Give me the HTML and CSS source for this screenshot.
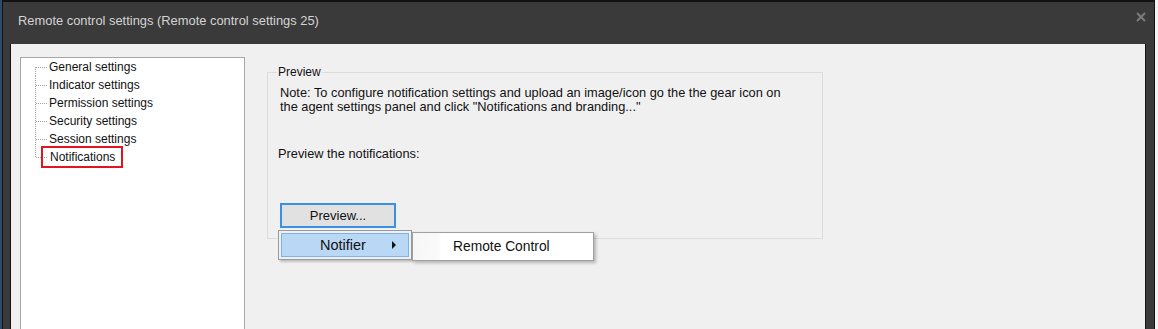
FILE: index.html
```html
<!DOCTYPE html>
<html>
<head>
<meta charset="utf-8">
<link rel="stylesheet" href="styles.css">
</head>
<body>
<div class="window">
  <div class="titlebar">
    <span class="title">Remote control settings (Remote control settings 25)</span>
    <svg class="close" width="10" height="10" viewBox="0 0 10 10"><path d="M1 1L9 9M9 1L1 9" stroke="#7c7c7c" stroke-width="2"/></svg>
  </div>
  <div class="client">
    <div class="tree">
      <ul class="nodes">
        <li class="first">General settings</li>
        <li>Indicator settings</li>
        <li>Permission settings</li>
        <li>Security settings</li>
        <li>Session settings</li>
        <li class="last"><span class="mark">Notifications</span></li>
      </ul>
    </div>
    <div class="main">
      <fieldset class="group">
        <legend class="legend">Preview</legend>
        <p class="note">Note: To configure notification settings and upload an image/icon go the the gear icon on<br>the agent settings panel and click "Notifications and branding..."</p>
        <p class="prompt">Preview the notifications:</p>
        <div class="btnwrap">
          <button class="btn">Preview...</button>
          <div class="menu">
            <div class="menuitem"><span>Notifier</span><span class="arrow"></span></div>
          </div>
          <div class="submenu">
            <div class="subitem">Remote Control</div>
          </div>
        </div>
      </fieldset>
    </div>
  </div>
</div>
</body>
</html>
```
FILE: styles.css
```css
html, body {
  margin: 0;
  padding: 0;
  height: 329px;
  overflow: hidden;
}
body {
  background: linear-gradient(to right, #2f4a6a 0 2px, #f4f4f4 2px);
  font-family: "Liberation Sans", Arial, sans-serif;
  font-size: 12px;
  color: #111;
}
.window {
  margin-left: 2px;
  width: 1151px;
  height: 360px;
  background: #3a3a3a;
  border: 1px solid #121212;
  border-top-width: 2px;
  display: flex;
  flex-direction: column;
  box-sizing: content-box;
}
.titlebar {
  height: 42px;
  display: flex;
  justify-content: space-between;
  align-items: flex-start;
  padding: 0 8px 0 15px;
}
.title {
  color: #d4d4d4;
  font-size: 12.9px;
  margin-top: 11px;
}
.close {
  margin-top: 10px;
}
.client {
  flex: 1;
  margin: 0 8px 0 7px;
  background: #f0f0f0;
  border-left: 1px solid #141414;
  border-right: 1px solid #141414;
  display: flex;
  padding: 13px 0 0 9px;
  gap: 22px;
}
.tree {
  width: 223px;
  background: #fff;
  border: 1px solid #a7a7a7;
  border-bottom: none;
}
.nodes {
  list-style: none;
  margin: 0;
  padding: 0 0 0 14px;
}
.nodes li {
  height: 18px;
  display: flex;
  align-items: center;
  white-space: nowrap;
}
.nodes li::before {
  content: "";
  flex: none;
  width: 12px;
  height: 18px;
  margin-right: 2px;
  background-image:
    repeating-linear-gradient(to bottom, #a0a0a0 0 1px, transparent 1px 2px),
    repeating-linear-gradient(to right, #a0a0a0 0 1px, transparent 1px 2px);
  background-size: 1px 100%, 11px 1px;
  background-position: 0 0, 1px 9px;
  background-repeat: no-repeat;
}
.nodes li.first::before {
  background-size: 1px 9px, 11px 1px;
  background-position: 0 9px, 1px 9px;
}
.nodes li.last::before {
  background-size: 1px 10px, 11px 1px;
  background-position: 0 0, 1px 9px;
}
.mark {
  position: relative;
  margin-left: 1px;
}
.mark::after {
  content: "";
  position: absolute;
  left: -9px;
  right: -8px;
  top: -4px;
  bottom: -4px;
  border: 2px solid #e3141f;
}
.main {
  padding-top: 8px;
}
.group {
  width: 554px;
  margin: 0;
  padding: 0 0 10px 0;
  border: 1px solid #dcdcdc;
}
.legend {
  margin-left: 9px;
  padding: 0 1px;
  line-height: 14px;
}
.note {
  margin: 7px 0 0 12px;
  line-height: 14px;
  font-size: 12.8px;
}
.prompt {
  margin: 33px 0 0 10px;
  line-height: 14px;
  font-size: 12.8px;
}
.btnwrap {
  position: relative;
  margin: 42px 0 0 12px;
  width: 116px;
  height: 25px;
}
.btn {
  width: 116px;
  height: 25px;
  margin: 0;
  padding: 0;
  background: #e1e1e1;
  border: 2px solid #3c8fe2;
  font-family: "Liberation Sans", Arial, sans-serif;
  font-size: 13px;
  color: #111;
}
.menu {
  position: absolute;
  left: -2px;
  top: 27px;
  width: 128px;
  padding: 2px;
  background: #f0f0f0;
  border: 1px solid #9a9a9a;
  box-shadow: 2px 2px 2px rgba(0,0,0,0.2);
}
.menuitem {
  height: 22px;
  border: 1px solid #7db3e8;
  background: #b9d8f6;
  display: flex;
  align-items: center;
  padding: 0 12px 0 38px;
  font-size: 14.5px;
}
.arrow {
  margin-left: auto;
  width: 0;
  height: 0;
  border-top: 4px solid transparent;
  border-bottom: 4px solid transparent;
  border-left: 4px solid #111;
}
.submenu {
  position: absolute;
  left: 132px;
  top: 29px;
  width: 180px;
  height: 27px;
  background: linear-gradient(to right, #f6f6f6 0, #fafafa 26px, #fff 28px);
  border: 1px solid #a0a0a0;
  box-shadow: 2px 2px 3px rgba(0,0,0,0.25);
  display: flex;
  align-items: center;
}
.subitem {
  padding-left: 40px;
  font-size: 13.8px;
}
```
